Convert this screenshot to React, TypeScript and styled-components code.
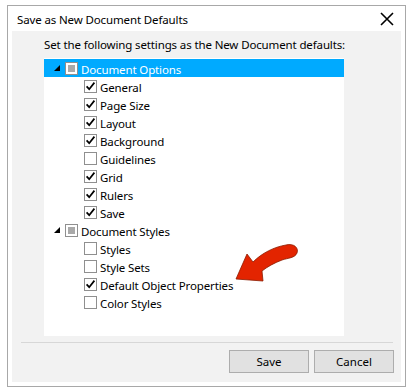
import styled, { createGlobalStyle } from "styled-components";

const GlobalStyle = createGlobalStyle`
  body {
    margin: 0;
    background: #ffffff;
    font-family: "Noto Sans", "Open Sans", sans-serif;
  }
`;

type Item = { label: string; checked: boolean };
type Group = { label: string; items: Item[] };

const groups: Group[] = [
  {
    label: "Document Options",
    items: [
      { label: "General", checked: true },
      { label: "Page Size", checked: true },
      { label: "Layout", checked: true },
      { label: "Background", checked: true },
      { label: "Guidelines", checked: false },
      { label: "Grid", checked: true },
      { label: "Rulers", checked: true },
      { label: "Save", checked: true },
    ],
  },
  {
    label: "Document Styles",
    items: [
      { label: "Styles", checked: false },
      { label: "Style Sets", checked: false },
      { label: "Default Object Properties", checked: true },
      { label: "Color Styles", checked: false },
    ],
  },
];

function Check({ checked }: { checked: boolean }) {
  return (
    <CheckBox>
      {checked && (
        <svg width="11" height="11" viewBox="0 0 11 11">
          <path d="M1.6 5.4 L4.2 8.2 L9.4 1.6" fill="none" stroke="#000" strokeWidth="1.7" />
        </svg>
      )}
    </CheckBox>
  );
}

function App() {
  return (
    <>
      <GlobalStyle />
      <Window>
        <TitleBar>
          <Title>Save as New Document Defaults</Title>
          <CloseButton>
            <svg width="14" height="14" viewBox="0 0 14 14">
              <path d="M1 1 L13 13 M13 1 L1 13" stroke="#000" strokeWidth="1.6" />
            </svg>
          </CloseButton>
        </TitleBar>
        <Client>
          <Instruction>Set the following settings as the New Document defaults:</Instruction>
          <TreePanel>
            {groups.map((g, gi) => (
              <div key={g.label}>
                <Row $selected={gi === 0}>
                  <Expander>
                    <svg width="6" height="6" viewBox="0 0 6 6">
                      <polygon points="0,6 6,0 6,6" fill="#000" />
                    </svg>
                  </Expander>
                  <TriBox>
                    <TriFill />
                  </TriBox>
                  <Label $selected={gi === 0}>{g.label}</Label>
                </Row>
                {g.items.map((it) => (
                  <ChildRow key={it.label}>
                    <Check checked={it.checked} />
                    <Label>{it.label}</Label>
                  </ChildRow>
                ))}
              </div>
            ))}
            <Arrow width="75" height="55" viewBox="0 0 75 55">
              <path
                d="M6 44 L17 19 L23 27 C32 18 44 12 56 10 C64 8 69 13 67 18 C65 23 58 23 52 25 C44 28 37 32 32 36 L33 46 Z"
                fill="#e32400"
                stroke="#8a1c00"
                strokeWidth="0.8"
              />
            </Arrow>
          </TreePanel>
          <Separator />
          <ButtonRow>
            <Button>Save</Button>
            <Button>Cancel</Button>
          </ButtonRow>
        </Client>
      </Window>
    </>
  );
}

export default App;

const Window = styled.div`
  margin: 5px 0 0 7px;
  width: 397px;
  height: 380px;
  border: 1px solid #a8a8a8;
  background: #ffffff;
  display: flex;
  flex-direction: column;
`;

const TitleBar = styled.div`
  height: 25px;
  display: flex;
  align-items: center;
  justify-content: space-between;
  padding: 0 11px 0 9px;
`;

const Title = styled.div`
  font-size: 11.5px;
  letter-spacing: -0.13px;
  color: #000;
  padding-top: 1px;
`;

const CloseButton = styled.div`
  display: flex;
  align-items: center;
  padding-top: 1px;
`;

const Client = styled.div`
  flex: 1;
  margin: 0 4px 4px 4px;
  background: #f2f2f2;
  display: flex;
  flex-direction: column;
`;

const Instruction = styled.div`
  font-size: 11.5px;
  letter-spacing: -0.13px;
  color: #000;
  padding: 6px 0 0 32px;
  height: 21px;
`;

const TreePanel = styled.div`
  position: relative;
  margin-left: 32px;
  width: 300px;
  height: 278px;
  padding-top: 1px;
  background: #ffffff;
  box-sizing: border-box;
`;

const Row = styled.div<{ $selected?: boolean }>`
  height: 18px;
  display: flex;
  align-items: center;
  background: ${(p) => (p.$selected ? "#00aaff" : "transparent")};
`;

const ChildRow = styled.div`
  height: 18px;
  display: flex;
  align-items: center;
  padding-left: 40px;
`;

const Expander = styled.div`
  width: 6px;
  height: 6px;
  margin: 0 5px 0 10px;
  display: flex;
`;

const TriBox = styled.div`
  width: 13px;
  height: 13px;
  box-sizing: border-box;
  border: 1px solid #8f8f8f;
  background: #ffffff;
  display: flex;
  align-items: center;
  justify-content: center;
`;

const TriFill = styled.div`
  width: 7px;
  height: 7px;
  background: #a9a9a9;
`;

const CheckBox = styled.div`
  width: 13px;
  height: 13px;
  box-sizing: border-box;
  border: 1px solid #8f8f8f;
  background: #ffffff;
  display: flex;
  align-items: center;
  justify-content: center;
`;

const Label = styled.span<{ $selected?: boolean }>`
  font-size: 11.5px;
  letter-spacing: -0.13px;
  margin-left: 3px;
  padding-top: 2px;
  color: ${(p) => (p.$selected ? "#ffffff" : "#000000")};
`;

const Arrow = styled.svg`
  position: absolute;
  left: 186px;
  top: 177px;
`;

const Separator = styled.div`
  margin: 6px 8px 0 9px;
  height: 1px;
  background: #d7d7d7;
`;

const ButtonRow = styled.div`
  display: flex;
  justify-content: flex-end;
  gap: 5px;
  padding: 7px 7px 0 0;
`;

const Button = styled.button`
  width: 80px;
  height: 23px;
  box-sizing: border-box;
  border: 1px solid #adadad;
  background: #e1e1e1;
  font-family: "Noto Sans", "Open Sans", sans-serif;
  font-size: 11.5px;
  color: #000;
  padding: 0;
`;
